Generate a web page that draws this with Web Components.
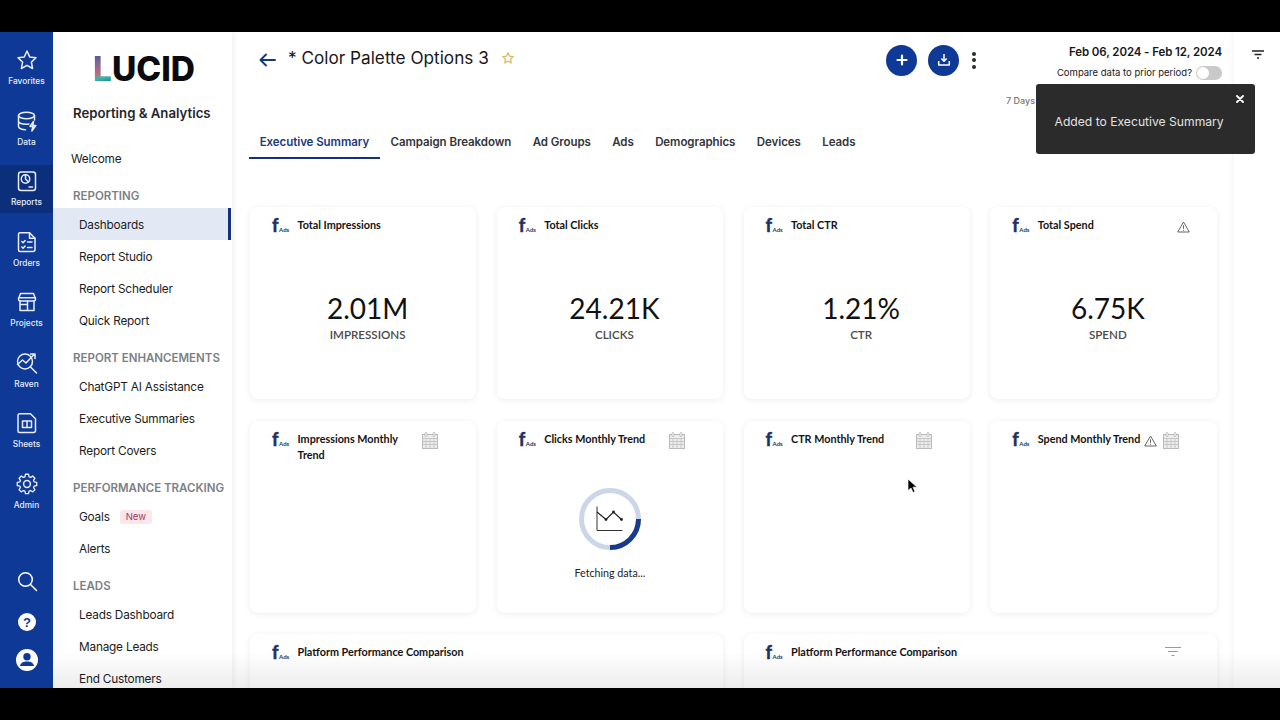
<!DOCTYPE html>
<html lang="en">
<head>
<meta charset="utf-8">
<title>Color Palette Options 3</title>
<style>
  html, body { margin: 0; height: 100%; background: #000; overflow: hidden; }
  body { font-family: "Noto Sans", sans-serif; }
</style>
</head>
<body>
<report-app>
  <app-rail slot="rail">
    <rail-item icon="star" label="Favorites"></rail-item>
    <rail-item icon="data" label="Data"></rail-item>
    <rail-item icon="reports" label="Reports" active></rail-item>
    <rail-item icon="orders" label="Orders"></rail-item>
    <rail-item icon="projects" label="Projects"></rail-item>
    <rail-item icon="raven" label="Raven"></rail-item>
    <rail-item icon="sheets" label="Sheets"></rail-item>
    <rail-item icon="admin" label="Admin"></rail-item>
    <rail-tool slot="tools" icon="search"></rail-tool>
    <rail-tool slot="tools" icon="help"></rail-tool>
    <rail-tool slot="tools" icon="user"></rail-tool>
  </app-rail>

  <side-nav slot="nav">
    <nav-link flush>Welcome</nav-link>
    <nav-head>REPORTING</nav-head>
    <nav-link active>Dashboards</nav-link>
    <nav-link>Report Studio</nav-link>
    <nav-link>Report Scheduler</nav-link>
    <nav-link>Quick Report</nav-link>
    <nav-head>REPORT ENHANCEMENTS</nav-head>
    <nav-link>ChatGPT AI Assistance</nav-link>
    <nav-link>Executive Summaries</nav-link>
    <nav-link>Report Covers</nav-link>
    <nav-head>PERFORMANCE TRACKING</nav-head>
    <nav-link badge="New">Goals</nav-link>
    <nav-link>Alerts</nav-link>
    <nav-head>LEADS</nav-head>
    <nav-link>Leads Dashboard</nav-link>
    <nav-link>Manage Leads</nav-link>
    <nav-link>End Customers</nav-link>
  </side-nav>

  <page-header slot="main"></page-header>
  <tab-bar slot="main"></tab-bar>
  <card-grid slot="main">
    <metric-card title="Total Impressions" value="2.01M" unit="IMPRESSIONS"></metric-card>
    <metric-card title="Total Clicks" value="24.21K" unit="CLICKS"></metric-card>
    <metric-card title="Total CTR" value="1.21%" unit="CTR"></metric-card>
    <metric-card title="Total Spend" value="6.75K" unit="SPEND" warn></metric-card>
    <trend-card title="Impressions Monthly Trend"></trend-card>
    <trend-card title="Clicks Monthly Trend" loading></trend-card>
    <trend-card title="CTR Monthly Trend"></trend-card>
    <trend-card title="Spend Monthly Trend" warn></trend-card>
    <wide-card title="Platform Performance Comparison"></wide-card>
    <wide-card title="Platform Performance Comparison" filter></wide-card>
  </card-grid>

  <toast-note slot="over">Added to Executive Summary</toast-note>
</report-app>

<script>
  'use strict';

  const NAV_FONT = '"Inter", "Noto Sans", sans-serif';
  const CARD_FONT = 'Lato, "Open Sans", sans-serif';

  const ICONS = {
    star: '<path d="M12 3l2.7 5.9 6.3.8-4.6 4.4 1.2 6.4-5.6-3.2-5.6 3.2 1.2-6.4L3 9.700l6.300-.8z"/>',
    data: '<ellipse cx="11.500" cy="6.500" rx="8" ry="3.200"/><path d="M3.500 6.500v11c0 1.800 3.200 3.200 7 3.200M19.500 6.500v4.500M3.500 12c0 1.800 3.400 3.200 8 3.200 1 0 1.600 0 2.400-.2"/><path d="M18.500 12.500l-3.500 5h3l-1.200 4.500 4-5.500h-3z"/>',
    reports: '<rect x="3.500" y="3" width="17" height="18.500" rx="2.500"/><circle cx="10.500" cy="10" r="4.200"/><path d="M10.500 5.800V10l3 3M14 18h3.500"/>',
    orders: '<path d="M5 2.800h9.500L20 8.300v11.200a2 2 0 0 1-2 2H5a1.500 1.500 0 0 1-1.500-1.500V4.300A1.500 1.500 0 0 1 5 2.800z"/><path d="M14.500 2.800v5.500H20M6.800 11.500l1.300 1.300 2-2.300M12.500 12h4.500M6.800 17l1.300 1.300 2-2.300M12.500 17.500h4.500"/>',
    projects: '<path d="M5.500 3.500h13l2 5.500a2 2 0 0 1-2 2H5.500a2 2 0 0 1-2-2z"/><path d="M3.500 7.800h17M5 11v9.500h14V11M5 14.500h7.500V20.500M12.500 14.500V11"/>',
    raven: '<circle cx="10" cy="10.500" r="7.500"/><path d="M15.500 16l6 6M2.500 13.500l5-4.500 3.500 3 8.500-9M15.500 3h4.500v4.500"/>',
    sheets: '<path d="M4.500 2.800h11l5 5v11.700a2 2 0 0 1-2 2H4.500a1.500 1.500 0 0 1-1.500-1.500V4.300a1.500 1.500 0 0 1 1.500-1.500z"/><path d="M7.500 10h9v6.500h-9zM12 10v6.500"/>',
    admin: '<circle cx="12" cy="12" r="3.400"/><path d="M10.300 2.500h3.400l.6 2.800 1.600.7 2.500-1.500 2.400 2.400-1.500 2.500.7 1.600 2.800.6v3.400l-2.800.6-.7 1.600 1.500 2.500-2.400 2.400-2.500-1.500-1.600.7-.6 2.800h-3.400l-.6-2.800-1.600-.7-2.500 1.500-2.400-2.400 1.500-2.500-.7-1.600-2.800-.6v-3.400l2.800-.6.7-1.600-1.500-2.500 2.400-2.400 2.500 1.500 1.600-.7z" transform="translate(1.200 0) scale(.9)"/>',
    search: '<circle cx="10.500" cy="10.500" r="6.800"/><path d="M15.500 15.500l6 6"/>',
  };

  // small base class, every element renders once into an open shadow root
  class ShadowPart extends HTMLElement {
    constructor() {
      super();
      this.attachShadow({ mode: 'open' });
    }
    connectedCallback() {
      this.shadowRoot.innerHTML = this.render();
    }
    attr(name) {
      return this.getAttribute(name) || '';
    }
  }

  function svgIcon(name, size) {
    return `<svg width="${size}" height="${size}" viewBox="0 0 24 24" fill="none" stroke="currentColor" stroke-width="1.500" stroke-linecap="round" stroke-linejoin="round">${ICONS[name]}</svg>`;
  }

  const CALENDAR = `<svg width="16" height="17" viewBox="0 0 16 17" fill="none" stroke="#b9b9b9" stroke-width="1">
    <rect x=".5" y="2.500" width="15" height="14" fill="#ececec"/>
    <path d="M.5 6.500h15M.5 9.500h15M.5 12.500h15M4 6.500v10M8 6.500v10M12 6.500v10" stroke="#c8c8c8"/>
    <rect x="3" y=".5" width="2" height="4" rx="1" fill="#fff"/><rect x="11" y=".5" width="2" height="4" rx="1" fill="#fff"/>
  </svg>`;

  const WARNING = `<svg width="13" height="12" viewBox="0 0 13 12" fill="none" stroke="#555" stroke-width=".9" stroke-linejoin="round">
    <path d="M6.500 1L12.300 11H.7z"/><path d="M6.500 4.300v3.500M6.500 8.900v.9"/>
  </svg>`;

  class ReportApp extends ShadowPart {
    render() {
      return `<style>
        :host { display: flex; flex-direction: column; height: 720px; background: #000; }
        .band { height: 32px; flex: none; background: #000; }
        .frame { position: relative; display: flex; height: 656px; flex: none; background: #fff; overflow: hidden; }
        .main { flex: none; width: 1002px; height: 656px; overflow: hidden; background: #fff; }
        .strip { flex: 1; display: flex; justify-content: center; align-items: flex-start; padding: 18px 0 0 2px; background: #fff; box-shadow: -2px 0 5px rgba(0,0,0,.035); z-index: 1; }
        .fade { position: absolute; left: 53px; right: 0; bottom: 0; height: 36px; z-index: 3; pointer-events: none; background: linear-gradient(rgba(0,0,0,0), rgba(0,0,0,.07)); }
        .cursor { position: absolute; left: 907px; top: 446px; z-index: 5; }
      </style>
      <div class="band"></div>
      <div class="frame">
        <slot name="rail"></slot>
        <slot name="nav"></slot>
        <div class="main"><slot name="main"></slot></div>
        <div class="strip">
          <svg width="12" height="10" viewBox="0 0 12 10" stroke="#222" stroke-width="1.300"><path d="M0 1h12M2.500 4.500h7M5 8h2"/></svg>
        </div>
        <slot name="over"></slot>
        <div class="fade"></div>
        <svg class="cursor" width="11" height="16" viewBox="0 0 11 16"><path d="M1 1v11.500l3-2.500 2 4.500 2-1-2-4.300h4z" fill="#000" stroke="#fff" stroke-width=".7"/></svg>
      </div>
      <div class="band"></div>`;
    }
  }

  class AppRail extends ShadowPart {
    render() {
      return `<style>
        :host { display: flex; flex-direction: column; flex: none; width: 53px; height: 656px; padding-top: 12px; box-sizing: border-box; background: #0f3996; color: #fff; z-index: 2; }
        .items { display: flex; flex-direction: column; gap: 12.500px; }
        .tools { margin-top: auto; display: flex; flex-direction: column; align-items: center; padding-bottom: 16px; gap: 14px; }
      </style>
      <div class="items"><slot></slot></div>
      <div class="tools"><slot name="tools"></slot></div>`;
    }
  }

  class RailItem extends ShadowPart {
    render() {
      return `<style>
        :host { display: flex; flex-direction: column; align-items: center; height: 48px; padding-top: 4px; box-sizing: border-box; color: #e8edf8; font: 500 8.300px ${NAV_FONT}; }
        :host([active]) { background: #0c2f7c; }
        svg { display: block; }
        span { margin-top: 3px; line-height: 12px; }
      </style>${svgIcon(this.attr('icon'), 24)}<span>${this.attr('label')}</span>`;
    }
  }

  class RailTool extends ShadowPart {
    render() {
      const kind = this.attr('icon');
      let art = svgIcon('search', 24);
      if (kind === 'help') {
        art = `<svg width="24" height="24" viewBox="0 0 24 24"><circle cx="12" cy="12" r="9" fill="#fff"/><text x="12" y="16.500" text-anchor="middle" font-family="Liberation Sans, sans-serif" font-weight="700" font-size="13" fill="#0f3996">?</text></svg>`;
      } else if (kind === 'user') {
        art = `<svg width="24" height="24" viewBox="0 0 24 24"><circle cx="12" cy="12" r="11" fill="#fff"/><circle cx="12" cy="8.800" r="3.700" fill="#0f3996"/><path d="M5 18c.6-3.300 3.300-4.500 7-4.500s6.400 1.200 7 4.500z" fill="#0f3996"/></svg>`;
      }
      return `<style>:host { display: block; height: 24px; color: #fff; } :host([icon=search]) { margin-bottom: 3px; } svg { display: block; }</style>${art}`;
    }
  }

  class SideNav extends ShadowPart {
    render() {
      return `<style>
        :host { display: block; flex: none; width: 179px; height: 656px; overflow: hidden; background: #fff; box-shadow: 2px 0 5px rgba(0,0,0,.06); z-index: 1; color: #1c1c22; }
        .logo { box-sizing: border-box; height: 72px; display: flex; justify-content: center; align-items: center; padding: 2px 0 0 3px; font: 800 33.500px Inter, "Liberation Sans", sans-serif; color: #0b0b0f; }
        .logo b { font-weight: 800; background: linear-gradient(168deg, #5c5f8e 20%, #8a6a96 38%, #c4667c 58%, #3db8a6 70%, #1f8f9a 80%); -webkit-background-clip: text; background-clip: text; color: transparent; }
        h1 { margin: 0; padding: 0 0 0 20px; height: 38px; font: 600 13.200px/18px ${NAV_FONT}; color: #26262c; }
      </style>
      <div class="logo"><b>L</b>UCID</div>
      <h1>Reporting &amp; Analytics</h1>
      <slot></slot>`;
    }
  }

  class NavHead extends ShadowPart {
    render() {
      return `<style>
        :host { display: block; height: 28px; margin-top: 6px; padding-left: 20px; font: 600 11.500px/32px ${NAV_FONT}; color: #7c7f86; white-space: nowrap; }
      </style><slot></slot>`;
    }
  }

  class NavLink extends ShadowPart {
    render() {
      const badge = this.attr('badge');
      return `<style>
        :host { display: flex; align-items: center; height: 32px; padding: 2px 0 0 26px; font: 400 11.800px ${NAV_FONT}; letter-spacing: -.2px; color: #1c1c22; box-sizing: border-box; }
        :host([flush]) { padding-left: 18px; }
        :host([active]) { background: #e3e9f4; border-right: 3px solid #12317f; margin-right: 1px; }
        .badge { margin-left: 10px; padding: 1px 6px; border-radius: 3px; background: #fbe6ec; color: #a2395d; font-size: 9.500px; line-height: 12px; letter-spacing: 0; }
      </style><slot></slot>${badge ? `<span class="badge">${badge}</span>` : ''}`;
    }
  }

  class PageHeader extends ShadowPart {
    render() {
      return `<style>
        :host { display: block; height: 93px; box-sizing: border-box; padding: 12px 12px 0 27px; font-family: ${NAV_FONT}; color: #17171c; }
        .row { display: flex; align-items: flex-start; }
        .back { margin-top: 8px; color: #14367f; }
        .title { margin: 0 0 0 12px; font: 400 17.200px/28px ${NAV_FONT}; white-space: nowrap; }
        .fav { margin: 7px 0 0 12px; color: #d9b75e; }
        .acts { margin-left: auto; display: flex; align-items: center; gap: 11px; height: 32px; }
        .btn { width: 31px; height: 31px; border-radius: 50%; background: #0f3996; color: #fff; display: flex; align-items: center; justify-content: center; }
        .dots { width: 4px; margin: 0 81px 0 2px; display: flex; flex-direction: column; gap: 2.500px; }
        .dots i { width: 4px; height: 4px; border-radius: 50%; background: #2a2a2f; }
        .dates { width: 165px; text-align: right; }
        .range { font: 600 11.500px/16px ${NAV_FONT}; letter-spacing: -.1px; }
        .cmp { display: flex; align-items: center; justify-content: flex-end; gap: 4px; margin-top: 5px; font-size: 9.500px; line-height: 16px; white-space: nowrap; }
        .switch { flex: none; width: 26px; height: 14px; border-radius: 7px; background: #c9c9c9; position: relative; }
        .switch i { position: absolute; left: 1px; top: 1px; width: 12px; height: 12px; border-radius: 50%; background: #fff; }
        .days { margin: 14px 187px 0 0; text-align: right; font-size: 9px; font-weight: 500; line-height: 12px; color: #777; }
      </style>
      <div class="row">
        <svg class="back" width="17" height="16" viewBox="0 0 17 16" fill="none" stroke="currentColor" stroke-width="1.900" stroke-linecap="round" stroke-linejoin="round"><path d="M1.500 8h14.500M7 2.500L1.500 8 7 13.500"/></svg>
        <h2 class="title">* Color Palette Options 3</h2>
        <svg class="fav" width="14" height="14" viewBox="0 0 24 24" fill="none" stroke="currentColor" stroke-width="2" stroke-linejoin="round">${ICONS.star}</svg>
        <div class="acts">
          <div class="btn"><svg width="12" height="12" viewBox="0 0 12 12" stroke="#fff" stroke-width="2.200" stroke-linecap="round"><path d="M6 1.500v9M1.500 6h9"/></svg></div>
          <div class="btn"><svg width="14" height="14" viewBox="0 0 14 14" fill="none" stroke="#fff" stroke-width="1.500" stroke-linejoin="round"><path d="M7 1v7M4.300 5.500L7 8.300l2.700-2.800M1.700 8v4h10.600V8"/></svg></div>
          <div class="dots"><i></i><i></i><i></i></div>
        </div>
        <div class="dates">
          <div class="range">Feb 06, 2024 - Feb 12, 2024</div>
          <div class="cmp"><span>Compare data to prior period?</span><span class="switch"><i></i></span></div>
        </div>
      </div>
      <div class="days">7 Days</div>`;
    }
  }

  class TabBar extends ShadowPart {
    render() {
      const names = ['Executive Summary', 'Campaign Breakdown', 'Ad Groups', 'Ads', 'Demographics', 'Devices', 'Leads'];
      const items = names.map((n, i) => `<span class="${i === 0 ? 'on' : ''}">${n}</span>`).join('');
      return `<style>
        :host { display: flex; height: 34px; padding-left: 17px; font: 600 11.500px ${NAV_FONT}; letter-spacing: -.06px; color: #33353c; }
        span { box-sizing: border-box; padding: 9px 10.700px 0; height: 34px; line-height: 16px; white-space: nowrap; }
        .on { color: #1a3a80; border-bottom: 2px solid #12317f; }
      </style>${items}`;
    }
  }

  class CardGrid extends ShadowPart {
    render() {
      return `<style>
        :host { display: grid; grid-template-columns: repeat(4, 226.250px); grid-auto-rows: 192px; gap: 21.500px 20.500px; margin: 48px 0 0 18px; }
      </style><slot></slot>`;
    }
  }

  const CARD_BOX = `
    :host { display: block; box-sizing: border-box; background: #fff; border-radius: 8px; box-shadow: 0 1px 6px rgba(0,0,0,.075); font-family: ${CARD_FONT}; color: #111; }
    .head { display: flex; align-items: flex-start; padding: 10px 0 0 22px; }
    .mark { flex: none; width: 25.500px; display: flex; align-items: flex-end; height: 16px; color: #1f3263; line-height: 1; }
    .mark b { font: 900 18px/16px ${CARD_FONT}; -webkit-text-stroke: .3px currentColor; }
    .mark small { font: 700 6px/7px ${CARD_FONT}; margin-left: .5px; }
    .name { flex: 1; font: 700 10.800px/16px ${CARD_FONT}; color: #141414; }
    svg { display: block; flex: none; }
  `;
  const MARK = '<div class="mark"><b>f</b><small>Ads</small></div>';

  class MetricCard extends ShadowPart {
    render() {
      const warn = this.hasAttribute('warn') ? `<span class="warn">${WARNING}</span>` : '';
      return `<style>${CARD_BOX}
        .warn { margin: 4px 27px 0 0; }
        .body { margin-top: 56px; padding-left: 9px; text-align: center; }
        .value { font: 400 28px/38px ${CARD_FONT}; color: #111; }
        .unit { font: 600 11.600px/16px ${CARD_FONT}; color: #4a4a4a; }
      </style>
      <div class="head">${MARK}<div class="name">${this.attr('title')}</div>${warn}</div>
      <div class="body"><div class="value">${this.attr('value')}</div><div class="unit">${this.attr('unit')}</div></div>`;
    }
  }

  class TrendCard extends ShadowPart {
    render() {
      const warn = this.hasAttribute('warn') ? `<span class="warn">${WARNING}</span>` : '';
      const spinner = this.hasAttribute('loading') ? `<fetch-spinner></fetch-spinner>` : '';
      return `<style>${CARD_BOX}
        .warn { margin: 4px 6px 0 0; }
        .cal { margin: 1px 38px 0 0; }
        .name { white-space: normal; }
      </style>
      <div class="head">${MARK}<div class="name">${this.attr('title')}</div>${warn}<div class="cal">${CALENDAR}</div></div>
      ${spinner}`;
    }
  }

  class WideCard extends ShadowPart {
    render() {
      const filter = this.hasAttribute('filter')
        ? `<svg class="flt" width="16" height="10" viewBox="0 0 16 10" stroke="#9a9a9a" stroke-width="1"><path d="M0 .5h16M3 4.500h10M6.500 8.500h3"/></svg>` : '';
      return `<style>${CARD_BOX}
        :host { grid-column: span 2; }
        .flt { margin: 3px 36px 0 0; }
      </style>
      <div class="head">${MARK}<div class="name">${this.attr('title')}</div>${filter}</div>`;
    }
  }

  class FetchSpinner extends ShadowPart {
    render() {
      return `<style>
        :host { display: flex; flex-direction: column; align-items: center; margin-top: 39px; font: 400 10.700px/14px ${CARD_FONT}; color: #222; }
        span { margin-top: 16px; }
      </style>
      <svg width="62" height="62" viewBox="0 0 62 62" fill="none">
        <circle cx="31" cy="31" r="28.500" stroke="#cdd6e8" stroke-width="5"/>
        <path d="M59.500 31A28.500 28.500 0 0 1 31 59.500" stroke="#173b8c" stroke-width="5"/>
        <path d="M18 18.500V42.500H43.500" stroke="#333" stroke-width="1"/>
        <path d="M18 24l9 7.500 7.500-7.500 8 7.500" stroke="#222" stroke-width="1.200"/>
        <circle cx="27" cy="31.500" r="1.400" fill="#222"/><circle cx="34.500" cy="24" r="1.400" fill="#222"/><circle cx="42.500" cy="31.500" r="1.400" fill="#222"/>
      </svg>
      <span>Fetching data...</span>`;
    }
  }

  class ToastNote extends ShadowPart {
    render() {
      return `<style>
        :host { position: absolute; left: 1036px; top: 52px; width: 219px; height: 70px; box-sizing: border-box; padding: 29px 0 0 18.500px; z-index: 4; border-radius: 3px; background: #2b2b2b; color: #e2e2e2; font: 400 12.150px/18px ${NAV_FONT}; white-space: nowrap; }
        svg { position: absolute; right: 11px; top: 11px; }
      </style>
      <svg width="8" height="8" viewBox="0 0 8 8" stroke="#fff" stroke-width="1.800" stroke-linecap="round"><path d="M1 1l6 6M7 1L1 7"/></svg>
      <slot></slot>`;
    }
  }

  customElements.define('report-app', ReportApp);
  customElements.define('app-rail', AppRail);
  customElements.define('rail-item', RailItem);
  customElements.define('rail-tool', RailTool);
  customElements.define('side-nav', SideNav);
  customElements.define('nav-head', NavHead);
  customElements.define('nav-link', NavLink);
  customElements.define('page-header', PageHeader);
  customElements.define('tab-bar', TabBar);
  customElements.define('card-grid', CardGrid);
  customElements.define('metric-card', MetricCard);
  customElements.define('trend-card', TrendCard);
  customElements.define('wide-card', WideCard);
  customElements.define('fetch-spinner', FetchSpinner);
  customElements.define('toast-note', ToastNote);
</script>
</body>
</html>
